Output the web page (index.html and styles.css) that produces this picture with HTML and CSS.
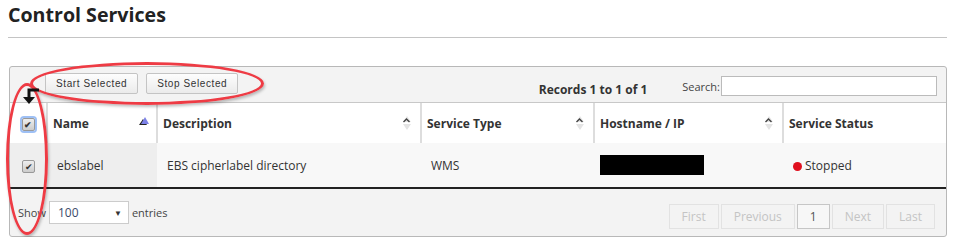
FILE: index.html
```html
<!DOCTYPE html>
<html lang="en">
<head>
    <meta charset="UTF-8">
    <title>Control Services</title>
    <link rel="stylesheet" href="styles.css">
</head>
<body>
    <h1 class="page-title">Control Services</h1>
    <div class="panel">
        <div class="toolbar">
            <div class="actions">
                <button class="btn">Start Selected</button>
                <button class="btn">Stop Selected</button>
            </div>
            <div class="records">Records 1 to 1 of 1</div>
            <label class="search">Search:<input type="text"></label>
        </div>
        <table class="grid">
            <colgroup>
                <col class="w-check">
                <col class="w-name">
                <col class="w-desc">
                <col class="w-type">
                <col class="w-host">
                <col>
            </colgroup>
            <thead>
                <tr>
                    <th class="col-check"><span class="check focus">&#10004;</span></th>
                    <th>Name
                        <svg class="sort" width="10" height="10" viewBox="0 0 10 10"><path d="M0 9 L4 3 L8 9 Z" fill="#222"/><path d="M2 8 L6 1 L10 8 Z" fill="#7b80e6"/></svg>
                    </th>
                    <th>Description
                        <svg class="sort" width="10" height="16" viewBox="0 0 10 16"><path d="M5 1 L9 7 L1 7 Z M1 9 L9 9 L5 15 Z" fill="#e4e4e4"/><path d="M1.5 7 L4.5 4 L7.5 7" fill="none" stroke="#444" stroke-width="1.4"/></svg>
                    </th>
                    <th>Service Type
                        <svg class="sort" width="10" height="16" viewBox="0 0 10 16"><path d="M5 1 L9 7 L1 7 Z M1 9 L9 9 L5 15 Z" fill="#e4e4e4"/><path d="M1.5 7 L4.5 4 L7.5 7" fill="none" stroke="#444" stroke-width="1.4"/></svg>
                    </th>
                    <th>Hostname / IP
                        <svg class="sort" width="10" height="16" viewBox="0 0 10 16"><path d="M5 1 L9 7 L1 7 Z M1 9 L9 9 L5 15 Z" fill="#e4e4e4"/><path d="M1.5 7 L4.5 4 L7.5 7" fill="none" stroke="#444" stroke-width="1.4"/></svg>
                    </th>
                    <th>Service Status</th>
                </tr>
            </thead>
            <tbody>
                <tr>
                    <td class="col-check sorted"><span class="check">&#10004;</span></td>
                    <td class="sorted">ebslabel</td>
                    <td>EBS cipherlabel directory</td>
                    <td>WMS</td>
                    <td><span class="redacted"></span></td>
                    <td><span class="dot"></span>Stopped</td>
                </tr>
            </tbody>
        </table>
        <div class="footer">
            <div class="length">Show <span class="select">100<span class="caret">&#9660;</span></span> entries</div>
            <div class="pager">
                <span class="pg disabled">First</span>
                <span class="pg disabled">Previous</span>
                <span class="pg current">1</span>
                <span class="pg disabled">Next</span>
                <span class="pg disabled">Last</span>
            </div>
        </div>
        <!-- annotations drawn on top of the screenshot -->
        <span class="mark mark-buttons"></span>
        <span class="mark mark-checks"></span>
        <svg class="arrow" width="18" height="18" viewBox="0 0 18 18">
            <path d="M17 2 H7 V10" fill="none" stroke="#111" stroke-width="3"/>
            <path d="M1 9 L13 9 L7 16 Z" fill="#111"/>
        </svg>
    </div>
</body>
</html>
```

FILE: styles.css
```css
html, body {
    margin: 0;
    padding: 0;
}
body {
    padding: 0 8px;
    font-family: "Open Sans", sans-serif;
    font-size: 12px;
    color: #333;
    background: #fff;
}
.page-title {
    margin: 0;
    padding: 3px 0 10px;
    font-size: 19.6px;
    line-height: 24px;
    font-weight: bold;
    color: #222;
    border-bottom: 1px solid #c4c4c4;
}
.panel {
    position: relative;
    margin: 28px 0 0 1px;
    border: 1px solid #b8b8b8;
    border-radius: 3px;
    background: #f3f3f3;
}
.toolbar {
    display: flex;
    align-items: flex-start;
    height: 35px;
    border-bottom: 1px solid #c8c8c8;
}
.actions {
    display: flex;
    gap: 8px;
    padding: 6px 0 0 35px;
}
.btn {
    height: 21px;
    padding: 0 10px;
    font-family: "Liberation Sans", Arial, sans-serif;
    font-size: 10px;
    letter-spacing: 0.6px;
    color: #333;
    background: linear-gradient(#fdfdfd, #ebebeb);
    border: 1px solid #c4c4c4;
    border-radius: 2px;
}
.records {
    margin: 14px 0 0 auto;
    font-weight: bold;
    font-size: 12px;
    color: #333;
}
.search {
    display: flex;
    align-items: center;
    margin: 9px 9px 0 35px;
    font-size: 11px;
    color: #444;
}
.search input {
    width: 210px;
    height: 16px;
    margin-left: 1px;
    border: 1px solid #bbb;
    padding: 1px 2px;
}
.grid {
    width: 100%;
    table-layout: fixed;
    border-collapse: collapse;
    background: #fff;
}
.w-check { width: 37px; }
.w-name { width: 110px; }
.w-desc { width: 264px; }
.w-type { width: 173px; }
.w-host { width: 189px; }
.grid th {
    position: relative;
    height: 40px;
    padding: 0 5px;
    text-align: left;
    font-size: 12px;
    font-weight: bold;
    color: #333;
    border-left: 2px solid #ddd;
    background: #fff;
}
.grid th:first-child, .grid td:first-child {
    border-left: none;
}
.grid td {
    height: 44px;
    padding: 0 10px;
    font-size: 12px;
    color: #333;
    background: #f8f8f8;
    border-bottom: 2px solid #222;
}
.grid td:nth-child(5) {
    padding-left: 6px;
}
.grid td.sorted {
    background: #eeeeee;
}
.grid .col-check {
    padding: 0;
    text-align: center;
}
.sort {
    position: absolute;
    right: 8px;
    top: 12px;
}
.grid th:nth-child(2) .sort {
    top: 13px;
    right: 7px;
}
.check {
    display: inline-block;
    width: 11px;
    height: 11px;
    border: 1px solid #999;
    border-radius: 2px;
    background: linear-gradient(#eee, #ccc);
    font-size: 9px;
    line-height: 11px;
    text-align: center;
    color: #333;
    vertical-align: middle;
}
.check.focus {
    box-shadow: 0 0 0 2px #9ec0f5;
}
.redacted {
    display: inline-block;
    width: 104px;
    height: 20px;
    background: #000;
    vertical-align: middle;
}
.dot {
    display: inline-block;
    width: 9px;
    height: 9px;
    border-radius: 50%;
    background: #e0101e;
    margin-right: 3px;
    vertical-align: -1px;
}
.footer {
    display: flex;
    justify-content: space-between;
    align-items: flex-start;
    height: 47px;
}
.length {
    display: flex;
    align-items: center;
    gap: 3px;
    margin: 12px 0 0 8px;
    font-size: 11px;
    color: #444;
}
.select {
    display: inline-flex;
    justify-content: space-between;
    align-items: center;
    width: 64px;
    height: 21px;
    padding: 0 6px 0 8px;
    border: 1px solid #ccc;
    background: #fff;
    font-size: 12px;
    color: #3a4a6a;
}
.caret {
    font-size: 8px;
    color: #333;
}
.pager {
    display: flex;
    gap: 2px;
    margin: 15px 11px 0 0;
}
.pg {
    display: inline-block;
    height: 23px;
    line-height: 23px;
    padding: 0 12px;
    font-size: 12px;
    border: 1px solid #e2e2e2;
    color: #c4c4c4;
}
.pg.current {
    border-color: #c6c6c6;
    color: #555;
    background: #f7f7f7;
}
.mark {
    position: absolute;
    border: 3px solid #ee3b44;
    border-radius: 50%;
    box-shadow: 1px 2px 3px rgba(0, 0, 0, 0.25);
}
.mark-buttons {
    left: 20px;
    top: -5px;
    width: 228px;
    height: 37px;
}
.mark-checks {
    left: -4px;
    top: 16px;
    width: 36px;
    height: 146px;
}
.arrow {
    position: absolute;
    left: 12px;
    top: 21px;
}
```
